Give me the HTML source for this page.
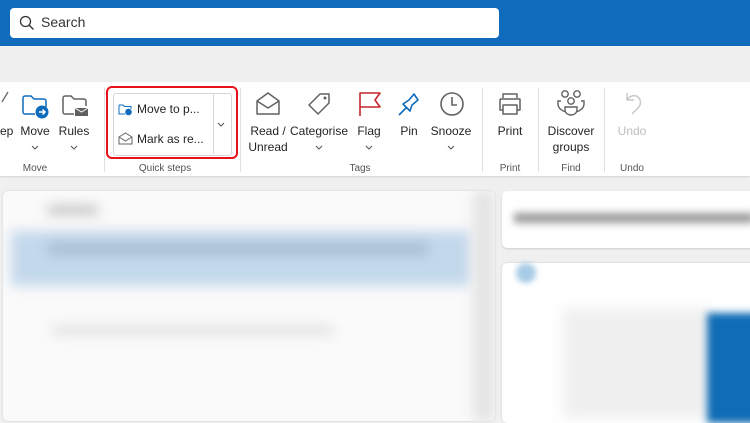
<!DOCTYPE html>
<html><head><style>
body{margin:0;width:750px;height:400px;overflow:hidden;background:#f0f0f0;font-family:"Liberation Sans",sans-serif;position:relative;color:#242424}
.a{position:absolute}
.t{position:absolute;font-size:12px;text-align:center;line-height:16px;transform:translateX(-50%);white-space:nowrap}
.g{position:absolute;font-size:10px;color:#555;transform:translateX(-50%)}
.sep{position:absolute;top:88px;width:1px;height:84px;background:#e0e0e0}
.ch{position:absolute;width:8px;height:5px;transform:translateX(-50%)}
.blur{filter:blur(6px)}
</style></head><body>
<svg width="0" height="0" style="position:absolute"><defs><symbol id="chv" viewBox="0 0 8 5"><path d="M1 1l3 3 3-3" fill="none" stroke="#555" stroke-width="1"/></symbol></defs></svg>
<div class="a" style="left:0;top:0;width:750px;height:46px;background:#0f6cbd"></div>
<div class="a" style="left:10px;top:8px;width:489px;height:30px;background:#fff;border-radius:4px"></div>
<svg class="a" style="left:19px;top:15px" width="16" height="16"><circle cx="6.5" cy="6.5" r="5" fill="none" stroke="#333" stroke-width="1.3"/><path d="M10 10l4.5 4.5" stroke="#333" stroke-width="1.3"/></svg>
<div class="a" style="left:41px;top:14px;font-size:14px;color:#333">Search</div>
<div class="a" style="left:0;top:82px;width:750px;height:94px;background:#fff;box-shadow:0 1px 2px rgba(0,0,0,.12)"></div>
<div class="a" style="left:0;top:124px;font-size:12px">ep</div>
<svg class="a" style="left:0;top:90px" width="10" height="14"><path d="M2 12L8 2" stroke="#666" stroke-width="1.3"/></svg>
<svg class="a" style="left:20px;top:91px" width="30" height="30"><path d="M3 7a2 2 0 0 1 2-2h6l3 3h10a2 2 0 0 1 2 2v6M3 7v14a2 2 0 0 0 2 2h10" fill="none" stroke="#0f6cbd" stroke-width="1.5"/><circle cx="22" cy="21" r="6.5" fill="#0f6cbd"/><path d="M19 21h6M22.5 18.5l2.5 2.5-2.5 2.5" stroke="#fff" stroke-width="1.5" fill="none"/></svg>
<div class="t" style="left:35px;top:123px">Move</div><svg class="ch" style="left:35px;top:145px"><use href="#chv"/></svg>
<svg class="a" style="left:60px;top:91px" width="30" height="30"><path d="M3 7a2 2 0 0 1 2-2h6l3 3h10a2 2 0 0 1 2 2v5M3 7v14a2 2 0 0 0 2 2h9" fill="none" stroke="#616161" stroke-width="1.5"/><path d="M15 17h13v8H15z" fill="#616161"/><path d="M15 17l6.5 4 6.5-4" stroke="#fff" fill="none"/></svg>
<div class="t" style="left:74px;top:123px">Rules</div><svg class="ch" style="left:74px;top:145px"><use href="#chv"/></svg>
<div class="g" style="left:35px;top:163px">Move</div>
<div class="sep" style="left:104px"></div>
<div class="a" style="left:106px;top:86px;width:128px;height:69px;border:2px solid #e8111b;border-radius:6px"></div>
<div class="a" style="left:113px;top:93px;width:117px;height:61px;border:1px solid #d6d6d6;border-radius:3px"></div>
<div class="a" style="left:213px;top:94px;width:1px;height:60px;background:#d6d6d6"></div>
<svg class="a" style="left:118px;top:102px" width="15" height="14"><path d="M1 3h4l1.5 1.5H13V7M1 3v9h6" fill="none" stroke="#0f6cbd"/><circle cx="10.5" cy="10" r="3.3" fill="#0f6cbd"/></svg>
<div class="a" style="left:137px;top:102px;font-size:12px">Move to p...</div>
<svg class="a" style="left:118px;top:132px" width="15" height="13"><path d="M1 5l6.5-4 6.5 4v7H1z M1 5l6.5 4 6.5-4" fill="none" stroke="#666"/></svg>
<div class="a" style="left:137px;top:132px;font-size:12px">Mark as re...</div>
<svg class="ch" style="left:221px;top:122px"><use href="#chv"/></svg>
<div class="g" style="left:165px;top:163px">Quick steps</div>
<div class="sep" style="left:240px"></div>
<svg class="a" style="left:254px;top:90px" width="28" height="28"><path d="M3 11l11-8 11 8v13H3z M3 11l11 7 11-7" fill="none" stroke="#616161" stroke-width="1.5" stroke-linejoin="round"/></svg>
<div class="t" style="left:268px;top:123px">Read /<br>Unread</div>
<svg class="a" style="left:305px;top:90px" width="28" height="28"><path d="M4 15L15 4h9v9L13 24z" fill="none" stroke="#616161" stroke-width="1.5" stroke-linejoin="round"/><circle cx="20" cy="8" r="1.5" fill="#616161"/></svg>
<div class="t" style="left:319px;top:123px">Categorise</div><svg class="ch" style="left:319px;top:145px"><use href="#chv"/></svg>
<svg class="a" style="left:357px;top:90px" width="26" height="28"><path d="M3 26V3h20l-5 7 5 7H3" fill="none" stroke="#c4262e" stroke-width="1.6" stroke-linejoin="round"/></svg>
<div class="t" style="left:369px;top:123px">Flag</div><svg class="ch" style="left:369px;top:145px"><use href="#chv"/></svg>
<svg class="a" style="left:396px;top:90px" width="28" height="28"><path d="M3 25l7-7M7 14l7 7 2-6 6-5-4-6-5 6z" fill="none" stroke="#0f6cbd" stroke-width="1.6" stroke-linejoin="round"/></svg>
<div class="t" style="left:409px;top:123px">Pin</div>
<svg class="a" style="left:438px;top:90px" width="28" height="28"><circle cx="14" cy="14" r="11" fill="none" stroke="#616161" stroke-width="1.6"/><path d="M14 7v8h5" fill="none" stroke="#616161" stroke-width="1.6"/></svg>
<div class="t" style="left:451px;top:123px">Snooze</div><svg class="ch" style="left:451px;top:145px"><use href="#chv"/></svg>
<div class="g" style="left:360px;top:163px">Tags</div>
<div class="sep" style="left:482px"></div>
<svg class="a" style="left:496px;top:91px" width="28" height="26"><path d="M7 7V3h14v4M4 8h20v11h-3M4 8v11h3M7 14h14v9H7z" fill="none" stroke="#616161" stroke-width="1.5" stroke-linejoin="round"/></svg>
<div class="t" style="left:510px;top:123px">Print</div>
<div class="g" style="left:510px;top:163px">Print</div>
<div class="sep" style="left:538px"></div>
<svg class="a" style="left:556px;top:89px" width="30" height="30"><circle cx="9" cy="5" r="3.2" fill="none" stroke="#616161" stroke-width="1.4"/><circle cx="21" cy="5" r="3.2" fill="none" stroke="#616161" stroke-width="1.4"/><circle cx="15" cy="12" r="3.2" fill="none" stroke="#616161" stroke-width="1.4"/><path d="M5 12H2v3c0 4 4 7 8 8 M25 12h3v3c0 4-4 7-8 8 M9 18h12v3c0 3-3 5-6 5s-6-2-6-5z" fill="none" stroke="#616161" stroke-width="1.4"/></svg>
<div class="t" style="left:571px;top:123px">Discover<br>groups</div>
<div class="g" style="left:571px;top:163px">Find</div>
<div class="sep" style="left:604px"></div>
<svg class="a" style="left:620px;top:90px" width="26" height="28"><path d="M7 3v7h7M7 10c3-4 6-5 9-4 5 2 6 8 2 12l-6 6" fill="none" stroke="#c8c8c8" stroke-width="1.5"/></svg>
<div class="t" style="left:632px;top:123px;color:#bdbdbd">Undo</div>
<div class="g" style="left:632px;top:163px">Undo</div>
<div class="a" style="left:3px;top:191px;width:492px;height:230px;background:#fafafa;border-radius:5px;box-shadow:0 0 2px rgba(0,0,0,.15);overflow:hidden">
 <div class="a blur" style="left:8px;top:40px;width:460px;height:55px;background:#c4d8ec"></div>
 <div class="a blur" style="left:45px;top:15px;width:50px;height:8px;background:#bbb"></div>
 <div class="a blur" style="left:45px;top:52px;width:380px;height:12px;background:#a9bdd0"></div>
 <div class="a blur" style="left:50px;top:135px;width:280px;height:8px;background:#ddd"></div>
 <div class="a blur" style="left:470px;top:0;width:22px;height:230px;background:#e4e4e4"></div>
</div>
<div class="a" style="left:502px;top:191px;width:260px;height:57px;background:#fff;border-radius:5px;box-shadow:0 1px 2px rgba(0,0,0,.15)">
 <div class="a blur" style="left:12px;top:22px;width:240px;height:10px;background:#999;filter:blur(4px)"></div>
</div>
<div class="a" style="left:502px;top:263px;width:260px;height:160px;background:#fff;border-radius:5px;box-shadow:0 0 2px rgba(0,0,0,.15)">
 <div class="a blur" style="left:14px;top:0px;width:20px;height:20px;border-radius:50%;background:#a7cbe6;filter:blur(3px)"></div>
 <div class="a blur" style="left:60px;top:45px;width:150px;height:110px;background:#f0f0f0"></div>
 <div class="a blur" style="left:205px;top:50px;width:60px;height:110px;background:#0f6cb5;filter:blur(4px)"></div>
</div>
</body></html>
